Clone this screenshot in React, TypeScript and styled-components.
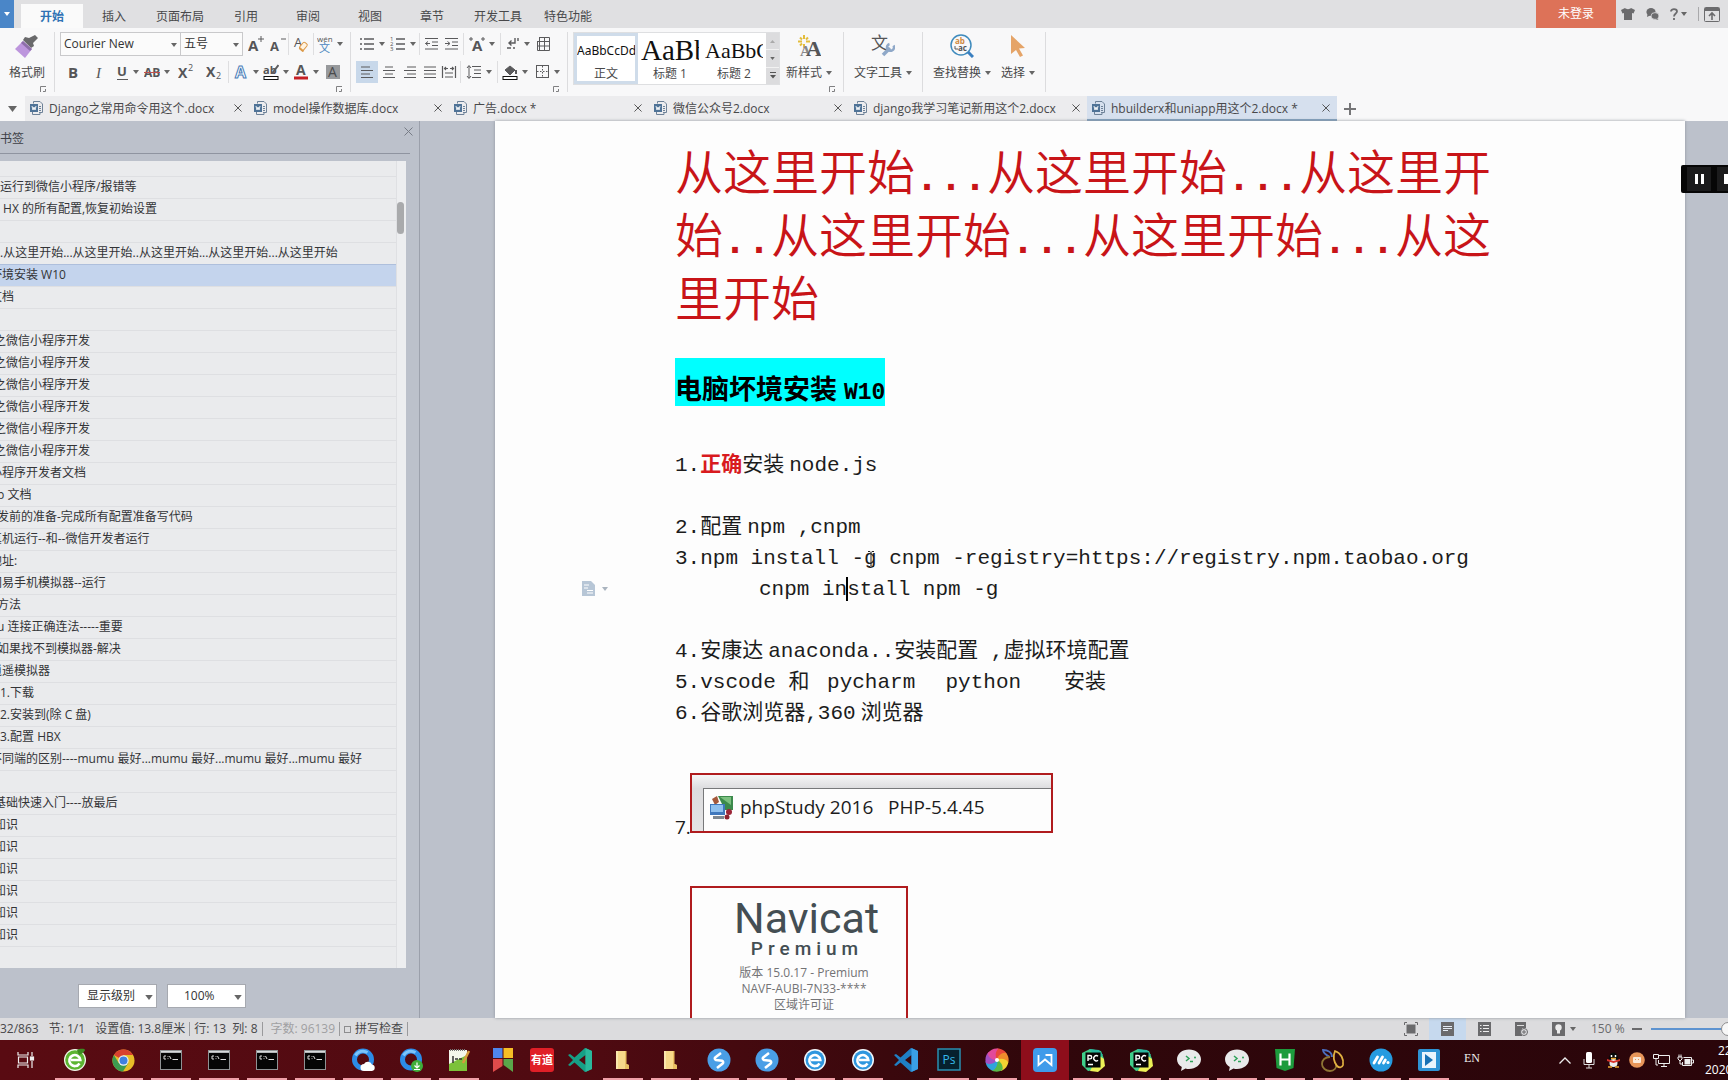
import React from "react";
import styled, { createGlobalStyle, css } from "styled-components";

const UI = `"Open Sans", "Noto Sans CJK SC", sans-serif`;
const DOC = `"Liberation Mono", "Noto Sans CJK SC", monospace`;

const GlobalStyle = createGlobalStyle`
  * { box-sizing: border-box; }
  body { margin: 0; overflow: hidden; background: #bcc1cb; }
  button, select { font: inherit; color: inherit; background: none; border: 0; padding: 0; margin: 0; }
  svg { display: block; flex: none; }
`;

const Shell = styled.div`
  height: 100vh;
  display: flex;
  flex-direction: column;
  overflow: hidden;
  font: 12px/16px ${UI};
  color: #48484a;
`;

/* ---------- menu bar ---------- */
const MenuBar = styled.header`
  flex: none;
  display: flex;
  align-items: stretch;
  height: 28px;
  background: #e0e0e2;
`;
const AppMenu = styled.button`
  width: 14px;
  background: #4a86c8;
  display: grid;
  place-items: center;
  color: #fff;
`;
const MenuTabs = styled.nav`
  display: flex;
  flex: 1;
  padding: 4px 0 0 7px;
`;
const MenuTab = styled.button<{ $wide?: boolean; $active?: boolean }>`
  width: ${(p) => (p.$wide ? 70 : 62)}px;
  padding-top: 2px;
  ${(p) =>
    p.$active &&
    css`
      background: #fafafa;
      color: #2f72b4;
      font-weight: 600;
    `}
`;
const Login = styled.button`
  width: 80px;
  background: #dd7258;
  color: #fff;
`;
const MenuIcons = styled.div`
  display: flex;
  align-items: center;
  gap: 11px;
  padding: 0 8px 0 5px;
  color: #6b6b6d;
`;
const MenuIcon = styled.button`
  display: flex;
  align-items: center;
  gap: 3px;
`;
const Rule = styled.span`
  width: 1px;
  height: 14px;
  margin-right: -6px;
  background: #a9a9ab;
`;

/* ---------- ribbon ---------- */
const Ribbon = styled.div`
  flex: none;
  display: flex;
  height: 68px;
  padding-top: 2px;
  background: #f8f8f9;
`;
const Group = styled.section<{ $pad?: number }>`
  position: relative;
  display: flex;
  flex-direction: column;
  height: 60px;
  margin-top: 2px;
  padding: 0 ${(p) => p.$pad ?? 5}px;
  border-right: 1px solid #dcdcde;
`;
const WideGroup = styled(Group)`
  flex-direction: row;
`;
const Row = styled.div`
  display: flex;
  align-items: center;
  height: 28px;
  margin-top: -2px;
  & + & { margin-top: 0; }
`;
const Tool = styled.button<{ $w: number; $on?: boolean }>`
  width: ${(p) => p.$w}px;
  height: 22px;
  display: flex;
  align-items: center;
  justify-content: center;
  gap: 4px;
  background: ${(p) => (p.$on ? "#c8d8ea" : "none")};
`;
const Split = styled.span`
  width: 1px;
  height: 22px;
  background: #dedee0;
  margin: 0 1px;
`;
const Launcher = styled.button`
  position: absolute;
  right: 8px;
  bottom: 0;
  color: #808082;
`;
const BigTool = styled.button<{ $w: number }>`
  width: ${(p) => p.$w}px;
  display: flex;
  flex-direction: column;
  align-items: center;
  justify-content: flex-start;
  gap: 7px;
  padding-top: 2px;
`;
const BigLabel = styled.span`
  display: flex;
  align-items: center;
  gap: 4px;
  white-space: nowrap;
`;
const Combo = styled.label<{ $w: number }>`
  position: relative;
  width: ${(p) => p.$w}px;
  height: 24px;
  border: 1px solid #c9c9cb;
  background: #fbfbfb;
  & + & { border-left: 0; }
  svg { position: absolute; right: 3px; top: 10px; pointer-events: none; }
`;
const ComboSelect = styled.select`
  appearance: none;
  width: 100%;
  height: 100%;
  padding-left: 3px;
  color: #333;
  outline: 0;
`;
const Gallery = styled.div`
  display: flex;
  height: 53px;
  background: #fff;
  border: 1px solid #dedfe1;
`;
const StyleCard = styled.button<{ $on?: boolean }>`
  width: 64px;
  height: 51px;
  padding: 0 2px;
  display: flex;
  flex-direction: column;
  align-items: center;
  justify-content: flex-end;
  overflow: hidden;
  box-shadow: ${(p) => (p.$on ? "inset 0 0 0 3px #cfdcea" : "none")};
`;
const Sample = styled.span<{ $size: number; $sans?: boolean }>`
  width: 58px;
  height: 31px;
  overflow: hidden;
  white-space: nowrap;
  text-align: left;
  color: #111;
  font: ${(p) => p.$size}px/31px ${(p) => (p.$sans ? `"Noto Sans", sans-serif` : `"Liberation Serif", serif`)};
`;
const SampleName = styled.span`
  height: 18px;
`;
const GalleryNav = styled.div`
  width: 13px;
  display: flex;
  flex-direction: column;
  gap: 1px;
  background: #f2f2f2;
`;
const GalleryBtn = styled.button`
  flex: 1;
  display: grid;
  place-items: center;
  background: #dcdcde;
`;

/* ---------- document tabs ---------- */
const DocTabs = styled.div`
  flex: none;
  display: flex;
  height: 25px;
  background: #f8f8f9;
`;
const TabMenu = styled.button`
  width: 25px;
  display: grid;
  place-items: center;
  color: #6a6a6c;
`;
const DocTab = styled.div<{ $w: number; $active?: boolean }>`
  width: ${(p) => p.$w}px;
  display: flex;
  align-items: center;
  gap: 6px;
  padding: 1px 7px 0 5px;
  background: ${(p) => (p.$active ? "#d6e0ee" : "#ececee")};
  border-bottom: ${(p) => (p.$active ? "2px solid #7f9fbd" : "2px solid #ececee")};
`;
const DocName = styled.button`
  flex: 1;
  padding-top: 1px;
  text-align: left;
  white-space: nowrap;
`;
const IconButton = styled.button`
  display: grid;
  place-items: center;
`;
const AddTab = styled(IconButton)`
  width: 26px;
  color: #757577;
`;

/* ---------- workspace ---------- */
const Work = styled.main`
  position: relative;
  flex: 1;
  min-height: 0;
  display: flex;
  background: #bcc1cb;
`;
const Side = styled.aside`
  flex: none;
  width: 420px;
  display: flex;
  flex-direction: column;
  border-right: 1px solid #9ba0ab;
`;
const SideHead = styled.div`
  display: flex;
  justify-content: space-between;
  align-items: flex-start;
  height: 33px;
  margin-right: 9px;
  padding: 6px 0 0;
  border-bottom: 1px solid #8f94a0;
  color: #3c3f46;
`;
const SideClose = styled(IconButton)`
  margin-right: -3px;
`;
const SideTitle = styled.h2`
  margin: 4px 0 0;
  font: 12px/16px ${UI};
`;
const Outline = styled.div`
  position: relative;
  flex: 1;
  min-height: 0;
  margin: 7px 13px 0 0;
  padding-right: 9px;
  overflow: hidden;
  background: #edeef0;
`;
const Items = styled.ul`
  list-style: none;
  margin: 0;
  padding: 15px 0 0;
  height: 100%;
  background: #eaebed;
  border-right: 1px solid #dfe0e3;
`;
const Item = styled.li<{ $on?: boolean; $cut: number }>`
  height: 22px;
  border-top: 1px solid ${(p) => (p.$on ? "#aebfdc" : "#dedfe2")};
  background: ${(p) => (p.$on ? "#c4d4ed" : "none")};
  color: #333437;
  line-height: 20px;
  white-space: pre;
  text-indent: -${(p) => p.$cut}px;
  &:last-child { height: 23px; border-bottom: 1px solid #dedfe2; }
`;
const Thumb = styled.span`
  position: absolute;
  right: 2px;
  top: 41px;
  width: 7px;
  height: 32px;
  border-radius: 4px;
  background: #a9aaac;
`;
const SideFoot = styled.div`
  flex: none;
  display: flex;
  gap: 10px;
  height: 50px;
  padding: 16px 0 0 78px;
`;
const FootCombo = styled(Combo)`
  background: #fff;
  border-color: #a6a9b0;
  & + & { border-left: 1px solid #a6a9b0; }
`;
const FootSelect = styled(ComboSelect)<{ $pad: number }>`
  padding-left: ${(p) => p.$pad}px;
`;

const Page = styled.article`
  flex: 1;
  min-width: 0;
  margin: 0 43px 0 75px;
  padding: 25px 0 0 180px;
  overflow: hidden;
  background: #fdfdfd;
  box-shadow: 0 0 3px #8f939c;
  color: #1c1c1c;
  font: 21px/31px ${DOC};
`;
const Banner = styled.h1`
  margin: 0 0 23px;
  color: #c81418;
  font: 350 48px/63px ${DOC};
`;
const Line = styled.span`
  display: block;
  height: 63px;
  white-space: nowrap;
`;
const Dots = styled.span`
  font-size: 40px;
  font-weight: 700;
  line-height: 1;
`;
const Heading = styled.h2`
  width: max-content;
  height: 48px;
  margin: 0 0 44px;
  padding-top: 16px;
  background: #0ff;
  color: #000;
  font: bold 27px/36px ${DOC};
`;
const HeadLatin = styled.span`
  padding-left: 7px;
  font-size: 23px;
  line-height: 1;
`;
const Para = styled.p<{ $indent?: boolean }>`
  position: relative;
  margin: 0;
  height: 31px;
  padding-left: ${(p) => (p.$indent ? 84 : 0)}px;
  white-space: pre;
`;
const Red = styled.b`
  color: #d81a1e;
`;
const Gap = styled.span`
  padding-left: 5px;
`;
const Caret = styled.span`
  position: absolute;
  margin-left: -1px;
  top: 3px;
  width: 2px;
  height: 24px;
  background: #000;
`;
const Hover = styled.span`
  position: relative;
`;
const Pointer = styled.svg`
  position: absolute;
  left: 3px;
  top: 4px;
`;
const ParaMark = styled.button`
  position: absolute;
  left: -93px;
  top: 7px;
  display: flex;
  align-items: center;
  gap: 7px;
  color: #b7c6d6;
`;
const Picture = styled.div`
  display: flex;
  align-items: flex-end;
  margin-top: 44px;
  font: 19px/24px ${UI};
`;
const ListNo = styled.span`
  width: 15px;
  margin-bottom: -6px;
`;
const PhpShot = styled.div`
  width: 363px;
  height: 60px;
  padding: 13px 0 0 11px;
  border: 2px solid #b01c1e;
  background: linear-gradient(#f6f6f7, #dcdcde 24%, #e4e4e5);
`;
const PhpBox = styled.div`
  display: flex;
  align-items: center;
  height: 43px;
  padding: 0 0 6px 5px;
  border: solid #77787a;
  border-width: 1px 0 0 1px;
  background: #fdfdfd;
  white-space: pre;
  svg { margin-right: 6px; }
`;
const Navicat = styled.div`
  width: 218px;
  height: 200px;
  margin: 53px 0 0 15px;
  padding-top: 9px;
  border: 2px solid #b01c1e;
  text-align: center;
  color: #737375;
  font: 12px/16px ${UI};
`;
const Brand = styled.div`
  color: #444e53;
  font: 43px/42px Roboto, sans-serif;
  padding-left: 15px;
`;
const Edition = styled.div`
  margin-bottom: 6px;
  padding-left: 16px;
  color: #444e53;
  font: 500 19px/20px Roboto, sans-serif;
  letter-spacing: 5px;
`;
const Licence = styled.div`
  padding-left: 10px;
`;

const MediaBar = styled.div`
  position: absolute;
  right: 0;
  top: 44px;
  display: flex;
  gap: 6px;
  width: 47px;
  height: 28px;
  padding: 2px 0 2px 6px;
  overflow: hidden;
  background: #060606;
  border-radius: 2px 0 0 2px;
`;
const MediaBtn = styled.button`
  flex: none;
  width: 24px;
  height: 24px;
  display: grid;
  place-items: center;
  background: #1b1b1c;
`;

/* ---------- status bar ---------- */
const Status = styled.footer`
  flex: none;
  display: flex;
  align-items: center;
  height: 22px;
  background: #dcdcde;
  white-space: pre;
  overflow: hidden;
`;
const Cell = styled.span<{ $dim?: boolean; $bar?: boolean }>`
  padding: 0 4px 0 ${(p) => (p.$dim ? 4 : 0)}px;
  margin-right: ${(p) => (p.$bar ? 4 : 6)}px;
  border-right: ${(p) => (p.$bar ? "1px solid #9a9a9c" : "0")};
  line-height: 14px;
  color: ${(p) => (p.$dim ? "#a0a0a2" : "#48484a")};
`;
const SpellCell = styled(Cell)`
  display: flex;
  align-items: center;
  gap: 4px;
`;
const SpellMark = styled.span`
  width: 7px;
  height: 7px;
  border: 1px solid #8c8c8e;
`;
const Views = styled.div`
  display: flex;
  height: 100%;
  margin-left: auto;
  color: #6a6a6c;
`;
const View = styled.button<{ $on?: boolean; $menu?: boolean }>`
  width: ${(p) => (p.$menu ? 47 : 37)}px;
  display: flex;
  align-items: center;
  justify-content: center;
  gap: 5px;
  background: ${(p) => (p.$on ? "#c6d9ee" : "none")};
`;
const ZoomText = styled.span`
  width: 38px;
  margin-left: 4px;
  line-height: 22px;
`;
const ZoomOut = styled(IconButton)`
  width: 16px;
`;
const ZoomRange = styled.input`
  appearance: none;
  width: 84px;
  height: 22px;
  margin: 0 -7px 0 6px;
  background: linear-gradient(#5d93d0, #5d93d0) 0 10px / 100% 2px no-repeat;
  &::-webkit-slider-thumb {
    appearance: none;
    width: 14px;
    height: 14px;
    border-radius: 50%;
    border: 1px solid #8d8d8f;
    background: #f8f8f8;
  }
`;

/* ---------- task bar ---------- */
const Taskbar = styled.nav`
  flex: none;
  display: flex;
  height: 40px;
  overflow: hidden;
  background: linear-gradient(90deg, #590b12 0, #4f0a11 34%, #30070b 60%, #2a050a 100%);
  color: #fff;
`;
const Task = styled.button<{ $w?: number; $run?: boolean; $on?: boolean }>`
  flex: none;
  width: ${(p) => p.$w ?? 38}px;
  display: grid;
  place-items: center;
  background: ${(p) => (p.$on ? "#8e0e1b" : "none")};
  position: relative;
  &::after {
    content: "";
    position: absolute;
    left: 4px;
    right: 4px;
    bottom: 0;
    height: 2px;
    background: ${(p) => (p.$run ? "#efa0a8" : "none")};
  }
`;
const Lang = styled.button`
  width: 28px;
  margin-left: 5px;
  font: 12px/16px "Liberation Serif", serif;
  padding-bottom: 4px;
  margin-right: auto;
  color: #eee;
`;
const Tray = styled.div`
  display: flex;
  align-items: center;
`;
const TrayBtn = styled.button`
  width: 24px;
  height: 100%;
  display: grid;
  place-items: center;
`;
const Clock = styled.time`
  width: 31px;
  padding-left: 8px;
  display: flex;
  flex-direction: column;
  gap: 3px;
  white-space: nowrap;
  overflow: hidden;
`;
const Hour = styled.span`
  padding-left: 13px;
`;

/* ---------- drawings ---------- */
const Arrow = ({ c = "#666", s = 6 }: { c?: string; s?: number }) => (
  <svg width={s} height={Math.round((s * 2) / 3)} viewBox="0 0 6 4"><path d="M0 0h6L3 4z" fill={c} /></svg>
);
const Cross = ({ s = 9, c = "#444" }: { s?: number; c?: string }) => (
  <svg width={s} height={s} viewBox="0 0 9 9"><path d="M.5.5l8 8M8.500.5l-8 8" stroke={c} fill="none" /></svg>
);
const G: React.FC<{ w?: number; h?: number; vb?: string; children: React.ReactNode }> = ({ w = 16, h, vb, children }) => (
  <svg width={w} height={h ?? w} viewBox={vb ?? `0 0 ${w} ${h ?? w}`} fill="none" stroke="#5a5a5c">{children}</svg>
);
const T: React.FC<{ x: number; y: number; s: number; c?: string; b?: boolean; i?: boolean; children: string; serif?: boolean }> = ({ x, y, s, c = "#555557", b, i, children, serif }) => (
  <text x={x} y={y} fontSize={s} fill={c} stroke="none" fontWeight={b ? 700 : 400} fontStyle={i ? "italic" : "normal"} fontFamily={serif ? "Liberation Serif, Noto Sans CJK SC, serif" : "Open Sans, Noto Sans CJK SC, sans-serif"}>{children}</text>
);
const LaunchIcon = () => (
  <svg width="6" height="6" viewBox="0 0 6 6" fill="none" stroke="currentColor"><path d="M.5 6V.5H6M3 5.500h2.500V3" /></svg>
);
const DocIcon = () => (
  <svg width="13" height="14" viewBox="0 0 13 14" fill="none" stroke="#6e8298">
    <path d="M3.500 2.500V.5h6.500l2.500 2.500v8.500H9M10 11.500v2H2.500V11" />
    <rect x=".5" y="3.500" width="7" height="7" fill="#4f7397" stroke="#4f7397" />
    <path d="M2 5l1 4 1-3 1 3 1-4" stroke="#fff" strokeWidth=".9" />
    <path d="M9 5.500h2M9 7.500h2M9 9.500h2" />
  </svg>
);

const lines = (d: string) => <G w={16}><path d={d} strokeWidth="1.200" /></G>;

const Cmd = () => (
  <svg width="22" height="20" viewBox="0 0 22 20">
    <rect width="22" height="20" fill="#8f9294" /><rect x="1" y="3" width="20" height="16" fill="#050505" /><rect x="1" y="1" width="20" height="1.500" fill="#d8dadb" />
    <path d="M6 6H4v3h2M8 6v.8M8 8.300v.8M9.500 6l1.500 3M12.500 9.500H18" stroke="#ddd" fill="none" />
  </svg>
);
const QQBrowser = ({ down }: { down?: boolean }) => (
  <svg width="24" height="24" viewBox="0 0 24 24">
    <circle cx="12" cy="11.500" r="8.500" fill="none" stroke="#2c8ce8" strokeWidth="5" />
    <path d="M4.500 7.500a8.500 8.500 0 0112-3" fill="none" stroke="#7cc4fa" strokeWidth="3" />
    {down ? (
      <g><circle cx="18" cy="18" r="6" fill="#3fae3b" /><path d="M18 14.500v5M15.500 17.500l2.500 2.500 2.500-2.500M15 21.500h6" stroke="#fff" fill="none" strokeWidth="1.200" /></g>
    ) : (
      <path d="M13 23a3.500 3.500 0 010-7 4.500 4.500 0 018 .5 3.300 3.300 0 010 6.500z" fill="#fff" />
    )}
  </svg>
);
const Folder = () => (
  <svg width="24" height="24" viewBox="0 0 24 24"><path d="M5 3h9l1 1v12l3 1v4H5z" fill="#f7d98a" /><path d="M14 3h1.500v13l2.500 1v4h-4z" fill="#e9bf62" /><path d="M5 3h2v18H5z" fill="#fbe7ae" /></svg>
);
const Swift = () => (
  <svg width="24" height="24" viewBox="0 0 24 24"><circle cx="12" cy="12" r="11.500" fill="#4a9ee6" /><path d="M14 5l-5.500 4.200c-1.200 1-.8 2.300.5 2.800l6 .8c1.500.6 1.500 2 .4 3L10 20" stroke="#fff" strokeWidth="2.600" fill="none" /></svg>
);
const EBrowser = () => (
  <svg width="24" height="24" viewBox="0 0 24 24"><circle cx="12" cy="12" r="11" fill="#f3f9fd" /><circle cx="12" cy="12" r="9.500" fill="#2f97df" /><path d="M16.500 15.500a5.500 5.500 0 11.800-3.500H8" stroke="#fff" strokeWidth="2.600" fill="none" /></svg>
);
const Code = ({ c, d }: { c: string; d: string }) => (
  <svg width="24" height="24" viewBox="0 0 24 24"><path d="M17 0l7 3v18l-7 3L6.500 14.500 2 18l-2-1 5-5-5-5 2-1 4.500 3.500zM17.500 7L11 12l6.500 5z" fill={c} fillRule="evenodd" /><path d="M17.500 0L24 3v18l-6.500 3z" fill={d} /></svg>
);
const PyCharm = () => (
  <svg width="24" height="24" viewBox="0 0 24 24"><path d="M1 5l8-4 11 2 3 8-4 10-12 2-6-6z" fill="#3fce8a" /><path d="M17 7l6 4 1 7-7 6-8-1z" fill="#ecf057" /><path d="M8 1l10 1 4 5-6 3z" fill="#2ab7a0" /><rect x="4.500" y="4.500" width="15" height="15" fill="#050505" /><path d="M7 13V7.500h2a1.700 1.700 0 010 3.400H7M17 8.300a2.600 2.600 0 100 4M7 16.500h5" stroke="#fff" strokeWidth="1.400" fill="none" /></svg>
);
const DevTool = () => (
  <svg width="24" height="24" viewBox="0 0 24 24"><path d="M12 1.500c6.600 0 12 4.200 12 9.800S18.600 21 12 21c-1.300 0-2.400-.1-3.500-.5L4 23l.8-4C1.800 17.300 0 14.500 0 11.300 0 5.700 5.400 1.500 12 1.500z" fill="#e9eaeb" /><path d="M9 8l3 2.500L9 13M13 13.500h3" stroke="#2ea35a" strokeWidth="1.500" fill="none" /><circle cx="18" cy="9.500" r="1" fill="#2ea35a" /></svg>
);

const outline: [string, number][] = [
  ["运行到微信小程序/报错等", 0], [" HX 的所有配置,恢复初始设置", 0], ["", 0],
  [".从这里开始...从这里开始..从这里开始...从这里开始...从这里开始", 0], ["坏境安装 W10", 10], ["文档", 10], ["", 0],
  ["之微信小程序开发", 6], ["之微信小程序开发", 6], ["之微信小程序开发", 6], ["之微信小程序开发", 6], ["之微信小程序开发", 6], ["之微信小程序开发", 6],
  ["小程序开发者文档", 10], ["p 文档", 3], ["发前的准备-完成所有配置准备写代码", 3], ["真机运行--和--微信开发者运行", 10], ["地址:", 10],
  ["网易手机模拟器--运行", 10], ["方法", 3], ["u 连接正确连法-----重要", 3], ["如果找不到模拟器-解决", 3], ["逍遥模拟器", 10],
  ["1.下载", 0], ["2.安装到(除 C 盘)", 0], ["3.配置 HBX", 0], ["不同端的区别----mumu 最好...mumu 最好...mumu 最好...mumu 最好", 10], ["", 0],
  ["基础快速入门----放最后", 6], ["知识", 6], ["知识", 6], ["知识", 6], ["知识", 6], ["知识", 6], ["知识", 6],
];
const menus: [string, boolean][] = [["开始", false], ["插入", false], ["页面布局", true], ["引用", false], ["审阅", false], ["视图", false], ["章节", false], ["开发工具", true], ["特色功能", true]];
const docs: [string, number][] = [["Django之常用命令用这个.docx", 224], ["model操作数据库.docx", 200], ["广告.docx *", 200], ["微信公众号2.docx", 200], ["django我学习笔记新用这个2.docx", 238], ["hbuilderx和uniapp用这个2.docx *", 250]];

function FontGroup() {
  return (
    <Group>
      <Row>
        <Combo $w={121}><ComboSelect aria-label="字体"><option>Courier New</option></ComboSelect><Arrow /></Combo>
        <Combo $w={62}><ComboSelect aria-label="字号"><option>五号</option></ComboSelect><Arrow /></Combo>
        <Tool $w={26} aria-label="增大字号"><G w={16}><T x={0} y={15} s={15} b>A</T><path d="M13 0v6M10 3h6" /></G></Tool>
        <Tool $w={18} aria-label="减小字号"><G w={16}><T x={0} y={15} s={13} b>A</T><path d="M11 3h5" /></G></Tool>
        <Split />
        <Tool $w={22} aria-label="清除格式"><G w={16}><T x={1} y={11} s={13}>A</T><rect x="8" y="6" width="5" height="8" rx="1.500" transform="rotate(40 10 10)" fill="#fff3e0" stroke="#dc9a48" /><path d="M6.500 12l4 3.500" stroke="#dc9a48" strokeWidth="2" /></G></Tool>
        <Split />
        <Tool $w={30} aria-label="拼音指南"><G w={16} h={18}><T x={0} y={7} s={8}>wén</T><T x={2} y={17} s={11} c="#4a86c0">文</T></G><Arrow /></Tool>
      </Row>
      <Row>
        <Tool $w={26} aria-label="加粗"><G><T x={3} y={14} s={15} b>B</T></G></Tool>
        <Tool $w={25} aria-label="倾斜"><G><T x={5} y={14} s={15} i serif>I</T></G></Tool>
        <Tool $w={31} aria-label="下划线"><G w={14} h={16}><T x={2} y={12} s={13} b>U</T><path d="M2 15.500h11" /></G><Arrow /></Tool>
        <Tool $w={30} aria-label="删除线"><G><T x={0} y={13} s={12} b>AB</T><path d="M0 8.500h16" stroke="#c05050" /></G><Arrow /></Tool>
        <Tool $w={28} aria-label="上标"><G><T x={0} y={14} s={14} b>X</T><T x={10} y={7} s={9}>2</T></G></Tool>
        <Tool $w={27} aria-label="下标"><G><T x={0} y={13} s={14} b>X</T><T x={10} y={15} s={9}>2</T></G></Tool>
        <Split />
        <Tool $w={31} aria-label="文字效果"><G><text x="2" y="14" fontSize="16" fontFamily="Open Sans" fontWeight="700" fill="#fff" stroke="#4a7db8">A</text></G><Arrow /></Tool>
        <Tool $w={30} aria-label="突出显示"><G><T x={0} y={10} s={11} b>ab</T><path d="M15.500 1L9 9.500" strokeWidth="2" /><rect x="1" y="12.500" width="14" height="3" fill="#fff" stroke="#111" /></G><Arrow /></Tool>
        <Tool $w={30} aria-label="字体颜色"><G><T x={3} y={11} s={14} b>A</T><path d="M1 14h14" stroke="#c52025" strokeWidth="3" /></G><Arrow /></Tool>
        <Tool $w={24} aria-label="字符底纹"><G><rect x="1" y="1" width="14" height="14" fill="#97999c" stroke="none" /><T x={3} y={13} s={14} c="#4a4a4c">A</T></G></Tool>
      </Row>
      <Launcher aria-label="字体设置"><LaunchIcon /></Launcher>
    </Group>
  );
}

function ParagraphGroup() {
  return (
    <Group>
      <Row>
        <Tool $w={32} aria-label="项目符号"><G><path d="M5 3h10M5 8h10M5 13h10M1 3h2M1 8h2M1 13h2" strokeWidth="1.300" /></G><Arrow /></Tool>
        <Tool $w={30} aria-label="编号"><G><path d="M6 3h9M6 8h9M6 13h9" strokeWidth="1.300" /><T x={0} y={5} s={6}>1</T><T x={0} y={10} s={6}>2</T><T x={0} y={15} s={6}>3</T></G><Arrow /></Tool>
        <Split />
        <Tool $w={21} aria-label="减少缩进"><G><path d="M1 2.500h13M8 6h6M8 9.500h6M1 13h13M6 7.500H1.500M4 5.500l-2.500 2 2.500 2" /></G></Tool>
        <Tool $w={20} aria-label="增加缩进"><G><path d="M1 2.500h13M8 6h6M8 9.500h6M1 13h13M1 7.500h4.500M3.500 5.500l2.500 2-2.500 2" /></G></Tool>
        <Split />
        <Tool $w={34} aria-label="中文版式"><G><T x={3} y={15} s={15} b>A</T><path d="M0 3h4M2 1v4M12 3h4M14 1v4" /></G><Arrow /></Tool>
        <Split />
        <Tool $w={31} aria-label="换行"><G w={14} h={16}><path d="M9 2v5H3M5.500 4.500L3 7l2.500 2.500M1 12h4M12 2v3M7 12h2" strokeWidth="1.400" /></G><Arrow /></Tool>
        <Tool $w={20} aria-label="表格"><G><path d="M4.500 1.500h10v13h-12V6M4.500 1v14M2 5.500h13M2 10h13M9.500 1v14" /></G></Tool>
      </Row>
      <Row>
        <Tool $w={22} $on aria-label="左对齐">{lines("M2 3h9M2 6.500h12M2 10h9M2 13.500h12")}</Tool>
        <Tool $w={22} aria-label="居中">{lines("M4 3h8M2 6.500h12M4 10h8M2 13.500h12")}</Tool>
        <Tool $w={20} aria-label="右对齐">{lines("M5 3h9M2 6.500h12M5 10h9M2 13.500h12")}</Tool>
        <Tool $w={19} aria-label="两端对齐">{lines("M2 3h12M2 6.500h12M2 10h12M2 13.500h12")}</Tool>
        <Tool $w={20} aria-label="分散对齐">{lines("M1.500 2v12M14.500 2v12M4 4.500h3M9 4.500h3M4 9h8M4 13h8M5 3L3.500 4.500 5 6M11 3l1.500 1.500L11 6")}</Tool>
        <Split />
        <Tool $w={34} aria-label="行距"><G><path d="M6 2.500h9M8 6h7M8 9.500h7M6 13.500h9M3 2v12M1 4l2-2.500L5 4M1 12l2 2.500L5 12" /></G><Arrow /></Tool>
        <Split />
        <Tool $w={32} aria-label="底纹"><G><path d="M3 6l5-4 5 4-5 5z" fill="#5a5a5c" /><path d="M14 6v4" strokeWidth="2" /><rect x="1" y="12.500" width="14" height="3" fill="#fff" stroke="#111" /></G><Arrow /></Tool>
        <Tool $w={31} aria-label="边框"><G><rect x="2.500" y="1.500" width="12" height="12" /><path d="M8.500 2v11M3 7.500h11" strokeDasharray="1.500 1.500" /></G><Arrow /></Tool>
      </Row>
      <Launcher aria-label="段落设置"><LaunchIcon /></Launcher>
    </Group>
  );
}

function TopBars() {
  return (
    <>
      <MenuBar>
        <AppMenu aria-label="菜单"><Arrow c="#fff" /></AppMenu>
        <MenuTabs>
          {menus.map(([m, wide], i) => <MenuTab key={m} $wide={wide} $active={i === 0}>{m}</MenuTab>)}
        </MenuTabs>
        <Login>未登录</Login>
        <MenuIcons>
          <MenuIcon aria-label="皮肤"><svg width="14" height="12" viewBox="0 0 14 12"><path d="M4 0c1 1.500 5 1.500 6 0l4 2-1.500 3.500L11 5v7H3V5l-1.500.5L0 2z" fill="currentColor" /></svg></MenuIcon>
          <MenuIcon aria-label="反馈"><svg width="13" height="12" viewBox="0 0 13 12" fill="currentColor"><ellipse cx="5" cy="4" rx="4.600" ry="4" /><path d="M1.500 6L1 9l3-1.500z" /><ellipse cx="9" cy="8" rx="4" ry="3.400" stroke="#e0e0e2" strokeWidth=".8" /><path d="M11 10l1.500 2-3-1z" /></svg></MenuIcon>
          <MenuIcon aria-label="帮助"><svg width="8" height="12" viewBox="0 0 8 12" fill="none" stroke="currentColor" strokeWidth="1.800"><path d="M1 3.500C1 .3 7 .3 7 3.500 7 5.500 4 5.500 4 8.500M4 10v2" /></svg><Arrow /></MenuIcon>
          <Rule />
          <MenuIcon aria-label="收起功能区"><svg width="16" height="15" viewBox="0 0 16 15" fill="none" stroke="currentColor"><rect x=".5" y=".5" width="15" height="14" rx="1" /><path d="M1 2.500h14" strokeWidth="3" /><path d="M8 13V6M5 9l3-3 3 3" strokeWidth="1.600" /></svg></MenuIcon>
        </MenuIcons>
      </MenuBar>
      <Ribbon>
        <WideGroup $pad={1}>
          <BigTool $w={52}>
            <svg width="24" height="24" viewBox="0 0 24 24"><path d="M20 1l3 3-5 5 1 3-3 2-8-8 2-3 4 1z" fill="#69696b" /><path d="M8 7l9 8-7 9L0 15z" fill="#bd96dd" /><path d="M8 7l9 8-2 2-9-8z" fill="#8d6fa9" /></svg>
            <BigLabel>格式刷</BigLabel>
          </BigTool>
          <Launcher aria-label="剪贴板"><LaunchIcon /></Launcher>
        </WideGroup>
        <FontGroup />
        <ParagraphGroup />
        <WideGroup $pad={5}>
          <Gallery>
            <StyleCard $on><Sample $size={12} $sans>AaBbCcDd</Sample><SampleName>正文</SampleName></StyleCard>
            <StyleCard><Sample $size={29}>AaBbC</Sample><SampleName>标题 1</SampleName></StyleCard>
            <StyleCard><Sample $size={22}>AaBbCc</Sample><SampleName>标题 2</SampleName></StyleCard>
            <GalleryNav>
              <GalleryBtn aria-label="上一行"><svg width="5" height="3" viewBox="0 0 5 3"><path d="M0 3h5L2.500 0z" fill="#aaa" /></svg></GalleryBtn>
              <GalleryBtn aria-label="下一行"><Arrow s={5} /></GalleryBtn>
              <GalleryBtn aria-label="更多"><svg width="6" height="7" viewBox="0 0 6 7"><path d="M0 0h6v1H0zM0 3h6L3 6.500z" fill="#555" /></svg></GalleryBtn>
            </GalleryNav>
          </Gallery>
          <BigTool $w={58}>
            <G w={24}><path d="M7 1v4M7 10v4M1 7.500h4M9 7.500h4M3 3.500l2 2M11 3.500l-2 2M3 11.500l2-2" stroke="#e3bd3c" strokeWidth="2" /><T x={3} y={22} s={15} c="#88888a" serif b>A</T><T x={9} y={22} s={22} serif b>A</T></G>
            <BigLabel>新样式 <Arrow /></BigLabel>
          </BigTool>
          <Launcher aria-label="样式设置"><LaunchIcon /></Launcher>
        </WideGroup>
        <WideGroup $pad={5}>
          <BigTool $w={68}>
            <G w={24}><T x={0} y={15} s={17}>文</T><path d="M12 21l7-7" stroke="#8fa8c8" strokeWidth="3.500" /><path d="M22.500 11.500a3.500 3.500 0 11-4-1.500" stroke="#8fa8c8" strokeWidth="2.500" /></G>
            <BigLabel>文字工具 <Arrow /></BigLabel>
          </BigTool>
        </WideGroup>
        <WideGroup $pad={5}>
          <BigTool $w={68}>
            <G w={24}><circle cx="11" cy="11" r="10" stroke="#3f8bbd" strokeWidth="1.500" /><path d="M18 18l5 5" stroke="#3a7fc0" strokeWidth="3" /><T x={5} y={10} s={8} c="#d08a40" b>ab</T><T x={8} y={17} s={8} b>ac</T><path d="M5 12v3h3" /></G>
            <BigLabel>查找替换 <Arrow /></BigLabel>
          </BigTool>
          <BigTool $w={44}>
            <svg width="16" height="24" viewBox="0 0 16 24"><path d="M1 1l14 13-6 .500 4 7-3 1.500-4-7-5 4z" fill="#e5a468" /></svg>
            <BigLabel>选择 <Arrow /></BigLabel>
          </BigTool>
        </WideGroup>
      </Ribbon>
      <DocTabs>
        <TabMenu aria-label="文档列表"><Arrow s={9} /></TabMenu>
        {docs.map(([name, w], i) => (
          <DocTab key={name} $w={w} $active={i === 5}>
            <DocIcon /><DocName>{name}</DocName><IconButton aria-label="关闭"><Cross s={8} /></IconButton>
          </DocTab>
        ))}
        <AddTab aria-label="新建"><svg width="12" height="12" viewBox="0 0 12 12"><path d="M6 0v12M0 6h12" stroke="currentColor" strokeWidth="2" /></svg></AddTab>
      </DocTabs>
    </>
  );
}

function Sidebar() {
  return (
    <Side>
      <SideHead><SideTitle>书签</SideTitle><SideClose aria-label="关闭书签"><Cross c="#777c86" /></SideClose></SideHead>
      <Outline>
        <Items>{outline.map(([t, cut], i) => <Item key={i} $cut={cut} $on={i === 4}>{t}</Item>)}</Items>
        <Thumb />
      </Outline>
      <SideFoot>
        <FootCombo $w={79}><FootSelect $pad={8} aria-label="显示级别"><option>显示级别</option></FootSelect><Arrow s={8} /></FootCombo>
        <FootCombo $w={79}><FootSelect $pad={16} aria-label="缩放"><option>100%</option></FootSelect><Arrow s={8} /></FootCombo>
      </SideFoot>
    </Side>
  );
}

function Document() {
  return (
    <Page>
      <Banner>
        <Line>从这里开始<Dots>...</Dots>从这里开始<Dots>...</Dots>从这里开</Line>
        <Line>始<Dots>..</Dots>从这里开始<Dots>...</Dots>从这里开始<Dots>...</Dots>从这</Line>
        <Line>里开始</Line>
      </Banner>
      <Heading>电脑坏境安装<HeadLatin>W10</HeadLatin></Heading>
      <Para>1.<Red>正确</Red>安装<Gap>node.js</Gap></Para>
      <Para />
      <Para>2.配置<Gap>npm ,cnpm</Gap></Para>
      <Para>3.npm install -<Hover>g<Pointer width="8" height="16" viewBox="0 0 8 16"><path d="M1 .5h2l1 1 1-1h2M4 1.500v13M1 15.500h2l1-1 1 1h2" stroke="#222" fill="none" /></Pointer></Hover> cnpm -registry=https://registry.npm.taobao.org</Para>
      <Para $indent>
        <ParaMark aria-label="段落布局"><svg width="13" height="15" viewBox="0 0 13 15"><path d="M0 0h9l4 4v11H0z" fill="currentColor" /><path d="M2 4h5M2 7h4M5 9.500h6M5 12h6" stroke="#fff" /></svg><Arrow c="#aab4bf" /></ParaMark>cnpm in<Caret />stall npm -g
      </Para>
      <Para />
      <Para>4.安康达<Gap>anaconda..</Gap>安装配置 ,虚拟环境配置</Para>
      <Para>5.vscode 和 <Gap>pycharm</Gap>  <Gap>python</Gap>   <Gap>安装</Gap></Para>
      <Para>6.谷歌浏览器,360<Gap>浏览器</Gap></Para>
      <Picture>
        <ListNo>7.</ListNo>
        <PhpShot>
          <PhpBox>
            <svg width="25" height="25" viewBox="0 0 25 25"><path d="M9 1h15v14h-8z" fill="#3c8a4c" /><path d="M11 2h11v8z" fill="#7cc07f" /><path d="M3 4l5-3 2 6-4 3z" fill="#a4583a" /><rect x="1" y="9" width="15" height="11" fill="#3f78bd" /><rect x="2" y="10" width="12" height="7" fill="#8fc0ee" /><path d="M4 21h11v3H4z" fill="#7e8790" /><circle cx="20" cy="17" r="3" fill="#9c2638" /><circle cx="18" cy="22" r="2.500" fill="#8d2130" /></svg>
            phpStudy 2016   PHP-5.4.45
          </PhpBox>
        </PhpShot>
      </Picture>
      <Navicat>
        <Brand>Navicat</Brand>
        <Edition>Premium</Edition>
        <Licence>版本 15.0.17 - Premium</Licence>
        <Licence>NAVF-AUBI-7N33-****</Licence>
        <Licence>区域许可证</Licence>
      </Navicat>
    </Page>
  );
}

function StatusBar() {
  return (
    <Status>
      <Cell>32/863</Cell><Cell>节: 1/1</Cell><Cell $bar>设置值: 13.8厘米</Cell>
      <Cell $bar>行: 13  列: 8</Cell><Cell $dim $bar>字数: 96139</Cell>
      <SpellCell $bar><SpellMark />拼写检查</SpellCell>
      <Views>
        <View aria-label="全屏"><svg width="14" height="14" viewBox="0 0 14 14"><rect x="2.500" y="2.500" width="9" height="9" fill="currentColor" /><path d="M.5 3V.5H3M11 .5h2.500V3M13.500 11v2.500H11M3 13.500H.5V11" stroke="currentColor" fill="none" /></svg></View>
        <View $on aria-label="页面视图"><svg width="13" height="14" viewBox="0 0 13 14"><rect width="13" height="14" fill="currentColor" /><path d="M2 4.500h9M2 6.500h9M2 8.500h5" stroke="#e6edf5" /></svg></View>
        <View aria-label="大纲视图"><svg width="13" height="14" viewBox="0 0 13 14"><rect width="13" height="14" fill="currentColor" /><path d="M2 3.500h1.500M5 3.500h6M2 6.500h1.500M5 6.500h6M2 9.500h1.500M5 9.500h6" stroke="#eee" /></svg></View>
        <View aria-label="Web视图"><svg width="13" height="14" viewBox="0 0 13 14"><path d="M0 0h11v6H7v8H0z" fill="currentColor" /><path d="M2 3.500h7" stroke="#ddd" /><circle cx="9" cy="10" r="3.500" fill="#dcdcde" stroke="currentColor" /><path d="M9 8v4M7 10h4" stroke="currentColor" /></svg></View>
        <View $menu aria-label="护眼模式"><svg width="13" height="14" viewBox="0 0 13 14"><rect width="13" height="14" fill="currentColor" /><circle cx="6.500" cy="5.500" r="3.200" fill="#ececec" /><path d="M5 8h3v3.500H5z" fill="#ececec" /></svg><Arrow s={6} /></View>
        <ZoomText>150 %</ZoomText>
        <ZoomOut aria-label="缩小"><svg width="10" height="2"><rect width="10" height="2" fill="currentColor" /></svg></ZoomOut>
        <ZoomRange type="range" aria-label="显示比例" defaultValue={100} />
      </Views>
    </Status>
  );
}

function TaskBar() {
  return (
    <Taskbar>
      <Task $w={51} aria-label="任务视图"><svg width="18" height="18" viewBox="0 0 18 18" fill="none" stroke="#eee" strokeWidth="1.200"><path d="M1 1v3h10V1M1 17v-3h10v3M1.500 6h9v6h-9zM15 1v4M15 10v7" /><rect x="13.500" y="6" width="3" height="3" fill="#eee" /></svg></Task>
      <Task $w={48} $run aria-label="360浏览器"><svg width="24" height="24" viewBox="0 0 24 24"><circle cx="12" cy="12" r="11" fill="#f2f8ea" /><circle cx="12" cy="12" r="9.800" fill="#5cb531" /><path d="M16.500 15.500a5.500 5.500 0 11.800-3.500H8" stroke="#fff" strokeWidth="2.600" fill="none" /><path d="M14 2c4-2 8-1 8 0s-3 4-6 5" fill="#3e8a22" /></svg></Task>
      <Task $w={48} $run aria-label="Chrome"><svg width="23" height="23" viewBox="0 0 24 24"><circle cx="12" cy="12" r="11.500" fill="#e8bd28" /><path d="M12 12L2 6.200A11.500 11.500 0 0122 6.300H12z" fill="#d9412f" /><path d="M2 6.200A11.500 11.500 0 0011.500 23.500L17 14.500H7z" fill="#3d9c50" /><circle cx="12" cy="12" r="5.400" fill="#f4f4f4" /><circle cx="12" cy="12" r="4.200" fill="#4080e0" /></svg></Task>
      {[1, 2, 3, 4].map((n) => <Task key={n} $w={48} $run aria-label="命令提示符"><Cmd /></Task>)}
      <Task $w={48} $run aria-label="QQ浏览器"><QQBrowser /></Task>
      <Task $w={48} $run aria-label="下载"><QQBrowser down /></Task>
      <Task $w={48} $run aria-label="记事本"><svg width="24" height="24" viewBox="0 0 24 24"><rect x="2" y="2" width="18" height="21" fill="#f3f6ec" /><path d="M2 16l18-9v16H2z" fill="#7cc23a" /><path d="M3 2h16" stroke="#777" strokeWidth="2" strokeDasharray="1 1" /><path d="M22 3l-6 12" stroke="#d79a3c" strokeWidth="2.500" /><path d="M6 8v7M8 11h3M12 11h3" stroke="#333" strokeWidth="1.500" /></svg></Task>
      <Task $w={40} aria-label="书签"><svg width="20" height="24" viewBox="0 0 20 24"><path d="M0 0h9.500v10H0z" fill="#4f86ec" /><path d="M10.500 0H20v10h-9.500z" fill="#f6bd26" /><path d="M0 11h9.500v7L0 24z" fill="#e04b4b" /><path d="M10.500 11H20v13l-9.500-7z" fill="#5aa64a" /></svg></Task>
      <Task aria-label="有道"><svg width="24" height="24" viewBox="0 0 24 24"><rect width="24" height="24" rx="3" fill="#e01f27" /><text x="12" y="16" fontSize="11" fontWeight="700" textAnchor="middle" fill="#fff" fontFamily="Noto Sans CJK SC">有道</text></svg></Task>
      <Task aria-label="代码编辑器"><Code c="#169f86" d="#2bb89c" /></Task>
      {[1, 2].map((n) => <Task key={n} $w={48} $run aria-label="文件夹"><Folder /></Task>)}
      {[1, 2].map((n) => <Task key={n} $w={48} $run aria-label="同步"><Swift /></Task>)}
      {[1, 2].map((n) => <Task key={n} $w={48} $run aria-label="浏览器"><EBrowser /></Task>)}
      <Task aria-label="VS Code"><Code c="#1f7fc4" d="#3aa0e6" /></Task>
      <Task $w={48} $run aria-label="Photoshop"><svg width="24" height="24" viewBox="0 0 24 24"><rect x="1" y="1" width="22" height="21" fill="#06202e" stroke="#2a8fb0" strokeWidth="1.500" /><text x="12" y="16" fontSize="12" textAnchor="middle" fill="#35b9ea" fontFamily="Open Sans">Ps</text></svg></Task>
      <Task $w={48} $run aria-label="取色"><svg width="24" height="24" viewBox="0 0 24 24">{["#e9473c", "#ef8b2c", "#f3d332", "#58b947", "#2fa4dc", "#a34fc4", "#e24a9a"].map((c, i) => <path key={c} d="M12 12C9 9 9 3 12 .5c5 0 8.500 2.500 10 6C18 5.500 14 8 12 12" fill={c} transform={`rotate(${i * 51} 12 12)`} />)}<circle cx="12" cy="12" r="2" fill="#fff" /></svg></Task>
      <Task $w={48} $on aria-label="WPS"><svg width="24" height="24" viewBox="0 0 24 24"><rect width="24" height="24" rx="4" fill="#3f9bea" /><path d="M5.500 7v10l6.500-5.500 6.500 5.500V7h-6" stroke="#fff" strokeWidth="1.800" fill="none" /></svg></Task>
      {[1, 2].map((n) => <Task key={n} $w={48} $run aria-label="PyCharm"><PyCharm /></Task>)}
      {[1, 2].map((n) => <Task key={n} $w={48} $run aria-label="微信开发者工具"><DevTool /></Task>)}
      <Task $w={48} $run aria-label="HBuilderX"><svg width="22" height="24" viewBox="0 0 22 24"><path d="M1 1h20l-1.500 19L11 23l-8.500-3z" fill="#1d9b3c" /><path d="M6.500 5.500v12M15.500 5.500v12M6.500 11.500h9" stroke="#fff" strokeWidth="2.200" /></svg></Task>
      <Task $w={48} $run aria-label="Navicat"><svg width="24" height="24" viewBox="0 0 24 24" fill="none" strokeWidth="1.800"><path d="M9 9C5 7 2 4 2 2c5 0 9 2 9 7" stroke="#4c6fc0" /><path d="M9 9c-5 0-8 3-8 7s4 7 8 7 7-3 6-7" stroke="#8d7434" /><path d="M14 3c6 2 9 8 8 14-1 3-4 3-6 1-3-4-4-10-2-15z" stroke="#e0b040" /></svg></Task>
      <Task $w={48} $run aria-label="MuMu"><svg width="24" height="24" viewBox="0 0 24 24"><circle cx="12" cy="12" r="11.500" fill="#259be0" /><path d="M5 15l3.500-6M10 15l3.500-6M14.500 15l1.800-3" stroke="#fff" strokeWidth="2.800" strokeLinecap="round" /><circle cx="19" cy="14.500" r="1.500" fill="#fff" /></svg></Task>
      <Task $w={48} $run aria-label="播放器"><svg width="24" height="24" viewBox="0 0 24 24"><rect x="1" y="1" width="22" height="22" rx="2" fill="#2e94d4" /><rect x="5" y="4" width="14" height="16" fill="#e9f5fc" /><path d="M8 6l8 6-8 6z" fill="#1872b4" /></svg></Task>
      <Lang>EN</Lang>
      <Tray>
        <TrayBtn aria-label="显示隐藏图标"><svg width="12" height="7" viewBox="0 0 12 7"><path d="M.5 6.500L6 1l5.500 5.500" stroke="#eee" strokeWidth="1.300" fill="none" /></svg></TrayBtn>
        <TrayBtn aria-label="麦克风"><svg width="12" height="17" viewBox="0 0 12 17"><rect x="3" width="6" height="11" rx="1.500" fill="#fff" /><path d="M1 7v5.500h10V7M6 13v3M3 16h6" stroke="#ddd" fill="none" /></svg></TrayBtn>
        <TrayBtn aria-label="QQ"><svg width="15" height="16" viewBox="0 0 15 16"><ellipse cx="7.500" cy="8" rx="5" ry="7.500" fill="#090909" /><ellipse cx="7.500" cy="11" rx="4" ry="4" fill="#eee" /><path d="M1 7l6.500 2L14 7v2l-6.500 2L1 9z" fill="#d8332c" /><path d="M5.500 3v2M9.500 3v2" stroke="#fff" strokeWidth="1.500" /><path d="M5 6.500h5M2 15h4M9 15h4" stroke="#f0a830" strokeWidth="1.500" /></svg></TrayBtn>
        <TrayBtn aria-label="助手"><svg width="16" height="16" viewBox="0 0 16 16"><circle cx="8" cy="8" r="7.800" fill="#e8965a" /><rect x="4" y="5" width="8" height="6" rx="1" fill="#fbeadb" /><path d="M6 7.500h1M9 7.500h1" stroke="#e8965a" /></svg></TrayBtn>
        <TrayBtn aria-label="网络"><svg width="17" height="15" viewBox="0 0 17 15" fill="none" stroke="#eee"><path d="M6 2.500h10.500v8H5.500V7M8 13.500h6M11 11v2M.5 1.500h5v4h-5zM3 6v6h2" /></svg></TrayBtn>
        <TrayBtn aria-label="电源"><svg width="17" height="13" viewBox="0 0 17 13" fill="none" stroke="#eee"><path d="M6.500 3.500h8v8h-9V8M15 6h1.500v3H15M1 3h4v2L3 7 1 5zM2 .5V3M4 .5V3M3 7v3h2" /><rect x="8" y="5.500" width="5" height="4.500" fill="#eee" /></svg></TrayBtn>
        <Clock><Hour>22:</Hour><span>2020/</span></Clock>
      </Tray>
    </Taskbar>
  );
}

export default function App() {
  return (
    <Shell>
      <GlobalStyle />
      <TopBars />
      <Work>
        <Sidebar />
        <Document />
        <MediaBar>
          <MediaBtn aria-label="暂停"><svg width="9" height="10" viewBox="0 0 9 10"><path d="M0 0h3v10H0zM6 0h3v10H6z" fill="#fff" /></svg></MediaBtn>
          <MediaBtn aria-label="停止"><svg width="10" height="10"><rect width="10" height="10" fill="#fff" /></svg></MediaBtn>
        </MediaBar>
      </Work>
      <StatusBar />
      <TaskBar />
    </Shell>
  );
}
